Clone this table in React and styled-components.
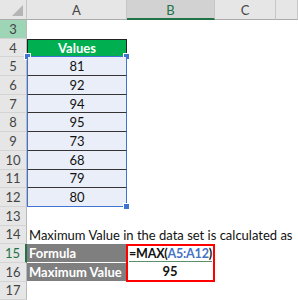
import React from 'react';
import styled, { createGlobalStyle } from 'styled-components';

const GlobalStyle = createGlobalStyle`
  html, body { margin: 0; padding: 0; background: #fff; }
  body { font-family: Lato, "Liberation Sans", sans-serif; }
`;

const Sheet = styled.div`
  width: 298px;
  height: 300px;
  overflow: hidden;
  display: grid;
  grid-template-columns: 27px 100px 88px 61px 1fr;
  grid-template-rows: 20px;
  grid-auto-rows: 18.7px;
  background: #fff;
`;

const Corner = styled.div`
  position: relative;
  background: #e6e6e6;
  border-right: 1px solid #c6c6c6;
  border-bottom: 1px solid #ababab;
  box-sizing: border-box;
  &::after {
    content: '';
    position: absolute;
    right: 3px;
    bottom: 3px;
    border-left: 11px solid transparent;
    border-bottom: 11px solid #b5b5b5;
  }
`;

const ColHead = styled.div`
  box-sizing: border-box;
  background: ${p => (p.active ? '#d2d2d2' : '#e6e6e6')};
  border-right: 1px solid #c6c6c6;
  border-bottom: ${p => (p.active ? '2px solid #217346' : '1px solid #ababab')};
  color: ${p => (p.active ? '#217346' : '#444')};
  font-size: 13px;
  display: flex;
  align-items: center;
  justify-content: center;
  padding-top: 1px;
`;

const RowHead = styled.div`
  box-sizing: border-box;
  background: ${p => (p.tone === 'green' ? '#9fd5b7' : '#e6e6e6')};
  border-bottom: 1px solid #d4d4d4;
  border-right: ${p => (p.tone === 'active' ? '2px solid #217346' : '1px solid #b9b9b9')};
  color: ${p => (p.tone === 'active' ? '#217346' : '#444')};
  font-size: 13px;
  display: flex;
  align-items: center;
  justify-content: center;
`;

const Cell = styled.div`
  position: relative;
  box-sizing: border-box;
  font-size: 13px;
  color: #111;
  white-space: nowrap;
  display: flex;
  align-items: center;
  justify-content: ${p => (p.center ? 'center' : 'flex-start')};
  padding: 0 2px;
  font-weight: ${p => (p.bold ? 700 : 400)};
`;

const HeaderCell = styled(Cell)`
  background: #00b050;
  color: #fff;
  border: 1px solid #222;
  border-bottom-color: #3f74d4;
`;

const DataCell = styled(Cell)`
  background: #e9eef8;
  border-left: 1px solid #3f74d4;
  border-right: 1px solid #3f74d4;
  border-bottom: 1px solid ${p => (p.last ? '#3f74d4' : '#333')};
`;

const LabelCell = styled(Cell)`
  background: #7f7f7f;
  color: #fff;
  border-bottom: 1px solid #fff;
`;

const BoxCell = styled(Cell)`
  margin-left: -1px;
  border-left: 2px solid #ff0000;
  border-right: 2px solid #ff0000;
  border-top: ${p => (p.top ? '2px solid #ff0000' : 'none')};
  border-bottom: ${p => (p.top ? 'none' : '2px solid #ff0000')};
  padding-left: 1px;
`;

const Overflow = styled(Cell)`
  grid-column: 2 / span 4;
`;

const Handle = styled.span`
  position: absolute;
  width: 5px;
  height: 5px;
  background: #3f74d4;
  border: 1px solid #fff;
  ${p => (p.left ? 'left: -4px;' : 'right: -4px;')}
  ${p => (p.bottom ? 'bottom: -4px;' : 'top: -4px;')}
`;

const Formula = styled.span`
  border-bottom: 1px solid #5b8f6a;
  line-height: 14px;
  font-size: 12.5px;
  letter-spacing: -0.2px;
`;

const Ref = styled.span`
  color: #4472c4;
`;

const Caret = styled.span`
  display: inline-block;
  width: 1px;
  height: 14px;
  background: #111;
  margin-left: 1px;
`;

const values = [81, 92, 94, 95, 73, 68, 79, 80];

export default function App() {
  return (
    <>
      <GlobalStyle />
      <Sheet>
        <Corner />
        <ColHead>A</ColHead>
        <ColHead active>B</ColHead>
        <ColHead>C</ColHead>
        <ColHead />

        <RowHead tone="green">3</RowHead>
        <Cell /><Cell /><Cell /><Cell />

        <RowHead>4</RowHead>
        <HeaderCell center bold>
          Values
          <Handle left bottom />
          <Handle bottom />
        </HeaderCell>
        <Cell /><Cell /><Cell />

        {values.map((v, i) => (
          <React.Fragment key={i}>
            <RowHead>{i + 5}</RowHead>
            <DataCell center last={i === values.length - 1}>
              {v}
              {i === values.length - 1 && <Handle bottom />}
            </DataCell>
            <Cell /><Cell /><Cell />
          </React.Fragment>
        ))}

        <RowHead>13</RowHead>
        <Cell /><Cell /><Cell /><Cell />

        <RowHead>14</RowHead>
        <Overflow>Maximum Value in the data set is calculated as</Overflow>

        <RowHead tone="active">15</RowHead>
        <LabelCell bold>Formula</LabelCell>
        <BoxCell top bold>
          <Formula>=MAX(<Ref>A5:A12</Ref>)</Formula>
          <Caret />
        </BoxCell>
        <Cell /><Cell />

        <RowHead>16</RowHead>
        <LabelCell bold>Maximum Value</LabelCell>
        <BoxCell bold center>95</BoxCell>
        <Cell /><Cell />

        <RowHead>17</RowHead>
        <Cell /><Cell /><Cell /><Cell />
      </Sheet>
    </>
  );
}
